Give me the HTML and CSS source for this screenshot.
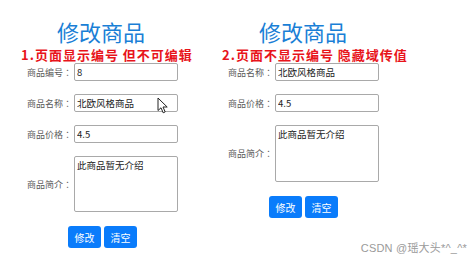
FILE: index.html
```html
<!DOCTYPE html>
<html lang="zh-CN">
<head>
  <meta charset="UTF-8">
  <title>修改商品</title>
  <link rel="stylesheet" href="styles.css">
</head>
<body>
  <div class="page">
    <!-- 方式一：显示编号但不可编辑 -->
    <div class="panel panel-left">
      <h1 class="title">修改商品</h1>
      <h2 class="note">1.页面显示编号&nbsp;但不可编辑</h2>
      <div class="form-grid">
        <label>商品编号<span class="colon" lang="zh-TW">：</span></label>
        <input type="text" value="8" readonly>
        <label>商品名称<span class="colon" lang="zh-TW">：</span></label>
        <input type="text" value="北欧风格商品">
        <label>商品价格<span class="colon" lang="zh-TW">：</span></label>
        <input type="text" value="4.5">
        <label>商品简介<span class="colon" lang="zh-TW">：</span></label>
        <textarea>此商品暂无介绍</textarea>
      </div>
      <div class="buttons">
        <button>修改</button>
        <button>清空</button>
      </div>
    </div>

    <!-- 方式二：隐藏域传值 -->
    <div class="panel panel-right">
      <h1 class="title">修改商品</h1>
      <h2 class="note">2.页面不显示编号&nbsp;隐藏域传值</h2>
      <div class="form-grid">
        <input type="hidden" value="8">
        <label>商品名称<span class="colon" lang="zh-TW">：</span></label>
        <input type="text" value="北欧风格商品">
        <label>商品价格<span class="colon" lang="zh-TW">：</span></label>
        <input type="text" value="4.5">
        <label>商品简介<span class="colon" lang="zh-TW">：</span></label>
        <textarea>此商品暂无介绍</textarea>
      </div>
      <div class="buttons">
        <button>修改</button>
        <button>清空</button>
      </div>
    </div>
  </div>

  <svg class="cursor" width="12" height="17" viewBox="0 0 12 17">
    <path d="M1 1 L1 13.5 L4 10.8 L6.2 15.8 L8.2 14.9 L6 10 L10.2 10 Z" fill="#fff" stroke="#222" stroke-width="1" stroke-linejoin="round"/>
  </svg>

  <div class="watermark">CSDN @瑶大头*^_^*</div>
</body>
</html>
```

FILE: styles.css
```css
body {
  margin: 0;
  background: #fff;
  font-family: "Noto Sans CJK SC", "Noto Sans", sans-serif;
  color: #333;
}
.page {
  display: flex;
  position: relative;
  width: 474px;
  height: 260px;
}
.panel {
  display: flex;
  flex-direction: column;
  align-items: flex-start;
}
.panel-left {
  width: 201px;
  padding-left: 21px;
}
.title {
  margin: 18px 0 0 36px;
  font-size: 22px;
  line-height: 26px;
  font-weight: normal;
  color: #1a7fd6;
}
.panel-right .title {
  margin-left: 37px;
}
.note {
  margin: 3px 0 0;
  font-size: 13px;
  line-height: 15px;
  font-weight: bold;
  letter-spacing: 1px;
  color: #e8141b;
  white-space: nowrap;
}
.form-grid {
  display: grid;
  grid-template-columns: 52px 104px;
  column-gap: 2px;
  row-gap: 13px;
  align-items: center;
  margin-top: 1px;
  margin-left: -1px;
}
.form-grid label {
  font-size: 9px;
  color: #5a5a5a;
  text-align: right;
  white-space: nowrap;
}
.colon {
  font-family: "Noto Sans CJK TC", "Noto Sans CJK SC", sans-serif;
}
.form-grid input,
.form-grid textarea {
  box-sizing: border-box;
  width: 104px;
  height: 18px;
  margin: 0;
  padding: 0 2px;
  border: 1px solid #a9a9a9;
  border-radius: 2px;
  font-family: inherit;
  font-size: 9.5px;
  color: #222;
  background: #fff;
}
.form-grid textarea {
  height: 56px;
  padding: 2px;
  resize: none;
  line-height: 12px;
}
.panel-right .form-grid textarea {
  height: 57px;
}
.buttons {
  display: flex;
  gap: 3px;
  margin-top: 14px;
  margin-left: 47px;
}
.buttons button {
  width: 33px;
  height: 22px;
  padding: 0;
  border: none;
  border-radius: 3px;
  background: #0a7cfb;
  color: #fff;
  font-family: inherit;
  font-size: 10px;
}
.cursor {
  position: absolute;
  left: 157px;
  top: 97px;
}
.watermark {
  position: absolute;
  right: 7px;
  bottom: 5px;
  font-family: "Liberation Sans", "Noto Sans CJK SC", sans-serif;
  font-size: 11px;
  color: #9a9a9a;
  letter-spacing: 0.2px;
}
```
